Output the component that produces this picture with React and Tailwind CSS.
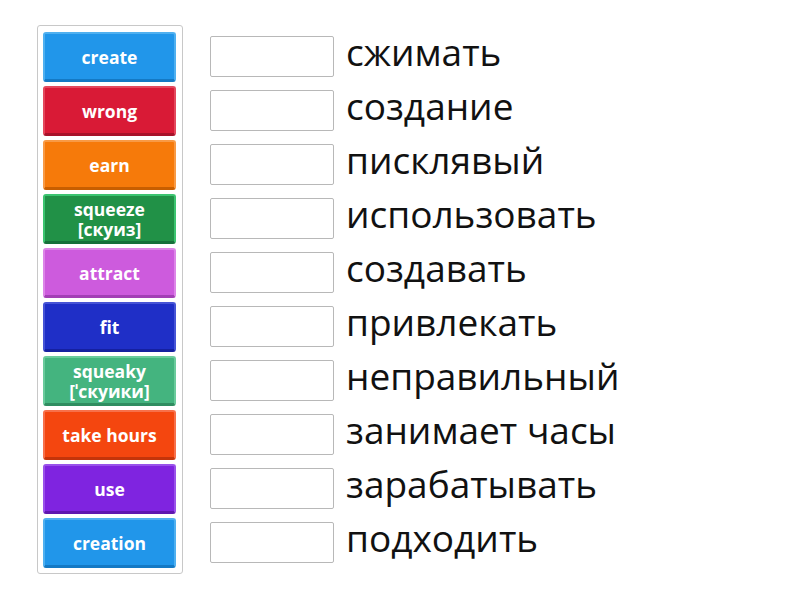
const items = [
  { t: ["create"], c: "bg-[#2196ea] border-[#4fb0f0] border-b-[#1479c4]" },
  { t: ["wrong"], c: "bg-[#d91a36] border-[#e4485d] border-b-[#a8122a]" },
  { t: ["earn"], c: "bg-[#f67a0a] border-[#f89a45] border-b-[#c85e00]" },
  { t: ["squeeze", "[скуиз]"], c: "bg-[#219147] border-[#3cc470] border-b-[#16703a]" },
  { t: ["attract"], c: "bg-[#cd5bdd] border-[#dd85e8] border-b-[#a33fb5]" },
  { t: ["fit"], c: "bg-[#1f2fc7] border-[#4654d6] border-b-[#1520a0]" },
  { t: ["squeaky", "[ˈскуики]"], c: "bg-[#44b47f] border-[#6acb9c] border-b-[#2f8d60]" },
  { t: ["take hours"], c: "bg-[#f4460f] border-[#f7704a] border-b-[#c4340a]" },
  { t: ["use"], c: "bg-[#7f24e0] border-[#9a52ea] border-b-[#5f16b0]" },
  { t: ["creation"], c: "bg-[#2196ea] border-[#4fb0f0] border-b-[#1479c4]" },
];

const words = [
  "сжимать",
  "создание",
  "писклявый",
  "использовать",
  "создавать",
  "привлекать",
  "неправильный",
  "занимает часы",
  "зарабатывать",
  "подходить",
];

export default function App() {
  return (
    <div
      className="w-[800px] h-[600px] bg-white flex"
      style={{ fontFamily: '"Open Sans", "Noto Sans", sans-serif' }}
    >
      <div className="ml-[37px] mt-[25px] w-[146px] h-[549px] border border-[#c8c8c8] rounded-[3px] flex flex-col gap-[4px] pt-[6px] pl-[5px]">
        {items.map((it, i) => (
          <div
            key={i}
            className={`w-[133px] h-[50px] rounded-[3px] border-2 border-b-[3px] flex flex-col items-center justify-center text-white font-bold text-[17.5px] leading-[20px] ${it.c}`}
          >
            {it.t.map((l, j) => (
              <span key={j}>{l}</span>
            ))}
          </div>
        ))}
      </div>
      <div className="ml-[27px] mt-[36px] flex flex-col gap-[13px]">
        {words.map((w, i) => (
          <div key={i} className="flex items-center h-[41px]">
            <div className="w-[124px] h-[41px] shrink-0 border border-[#b8b8b8] rounded-[2px] bg-white" />
            <span className="ml-[12px] text-[37px] text-[#111] leading-none -mt-[10px] whitespace-nowrap">{w}</span>
          </div>
        ))}
      </div>
    </div>
  );
}
